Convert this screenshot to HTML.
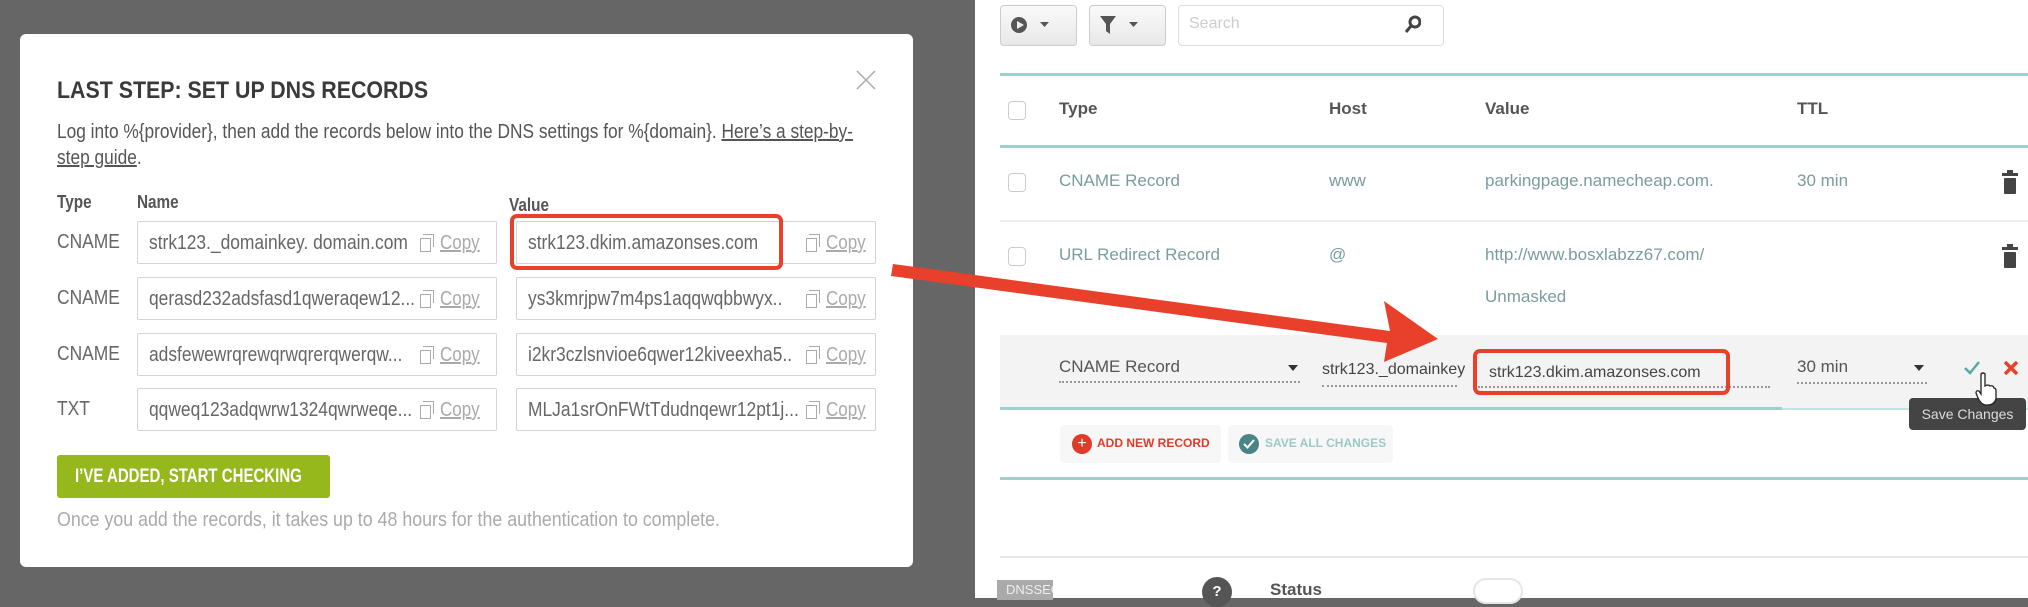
<!DOCTYPE html>
<html><head><meta charset="utf-8"><style>
*{margin:0;padding:0;box-sizing:border-box}
body{width:2028px;height:598px;overflow:hidden;background:#666;position:relative;font-family:"Liberation Sans",sans-serif}
.a{position:absolute;white-space:nowrap}
.sx{transform-origin:0 0}
.modal{position:absolute;left:20px;top:34px;width:893px;height:533px;background:#fff;border-radius:6px}
.box{position:absolute;height:43px;border:1px solid #d4d4d4;border-radius:2px;background:#fff;overflow:hidden}
.cp{position:absolute;font-size:20px;color:#aaa;text-decoration:underline;line-height:43px;transform:scaleX(.85);transform-origin:0 0}
.ic{position:absolute;width:11px;height:14px;border:1.5px solid #aaa;top:16px}
.ic:before{content:"";position:absolute;left:2px;top:-5px;width:10px;height:12px;border-top:1.5px solid #aaa;border-right:1.5px solid #aaa}
.t{font-size:20px;color:#666;line-height:43px;transform:scaleX(.87);transform-origin:0 0}
.right{position:absolute;left:975px;top:0;width:1053px;height:598px;background:#fff}
.rt{font-size:17px;color:#7a9c9d}
.dot{position:absolute;border-bottom:2px dotted #999;height:0}
</style></head><body>
<div class="modal">
<div class="a sx" style="left:37px;top:43px;font-size:24px;font-weight:bold;color:#3a3a3a;transform:scaleX(.89)">LAST STEP: SET UP DNS RECORDS</div>
<svg class="a" style="left:836px;top:36px" width="20" height="20"><path d="M1 1L19 19M19 1L1 19" stroke="#aaa" stroke-width="1.5"/></svg>
<div class="a sx" style="left:37px;top:85px;font-size:20px;color:#555;line-height:26px;transform:scaleX(.865)">Log into %{provider}, then add the records below into the DNS settings for %{domain}. <u>Here’s a step-by-</u><br><u>step guide</u>.</div>
<div class="a sx" style="left:37px;top:158px;font-size:18px;font-weight:bold;color:#555;transform:scaleX(.85)">Type</div>
<div class="a sx" style="left:117px;top:158px;font-size:18px;font-weight:bold;color:#555;transform:scaleX(.85)">Name</div>
<div class="a sx" style="left:489px;top:161px;font-size:18px;font-weight:bold;color:#555;transform:scaleX(.85)">Value</div>
</div>
<div class="a t" style="left:57px;top:221px">CNAME</div>
<div class="a t" style="left:57px;top:277px">CNAME</div>
<div class="a t" style="left:57px;top:333px">CNAME</div>
<div class="a t" style="left:57px;top:388px">TXT</div>

<div class="box" style="left:137px;top:221px;width:360px"><span class="a t" style="left:11px">strk123._domainkey. domain.com</span><span class="ic" style="left:282px"></span><span class="cp" style="left:302px">Copy</span></div>
<div class="box" style="left:137px;top:277px;width:360px"><span class="a t" style="left:11px">qerasd232adsfasd1qweraqew12...</span><span class="ic" style="left:282px"></span><span class="cp" style="left:302px">Copy</span></div>
<div class="box" style="left:137px;top:333px;width:360px"><span class="a t" style="left:11px">adsfewewrqrewqrwqrerqwerqw...</span><span class="ic" style="left:282px"></span><span class="cp" style="left:302px">Copy</span></div>
<div class="box" style="left:137px;top:388px;width:360px"><span class="a t" style="left:11px">qqweq123adqwrw1324qwrweqe...</span><span class="ic" style="left:282px"></span><span class="cp" style="left:302px">Copy</span></div>

<div class="box" style="left:516px;top:221px;width:360px"><span class="a t" style="left:11px">strk123.dkim.amazonses.com</span><span class="ic" style="left:289px"></span><span class="cp" style="left:309px">Copy</span></div>
<div class="box" style="left:516px;top:277px;width:360px"><span class="a t" style="left:11px">ys3kmrjpw7m4ps1aqqwqbbwyx..</span><span class="ic" style="left:289px"></span><span class="cp" style="left:309px">Copy</span></div>
<div class="box" style="left:516px;top:333px;width:360px"><span class="a t" style="left:11px">i2kr3czlsnvioe6qwer12kiveexha5..</span><span class="ic" style="left:289px"></span><span class="cp" style="left:309px">Copy</span></div>
<div class="box" style="left:516px;top:388px;width:360px"><span class="a t" style="left:11px">MLJa1srOnFWtTdudnqewr12pt1j...</span><span class="ic" style="left:289px"></span><span class="cp" style="left:309px">Copy</span></div>
<div class="a" style="left:510px;top:214px;width:273px;height:56px;border:4px solid #e8402a;border-radius:7px"></div>

<div class="a" style="left:57px;top:455px;width:273px;height:43px;background:#96b81c;border-radius:3px"></div>
<div class="a sx" style="left:75px;top:455px;color:#fff;font-weight:bold;font-size:19px;line-height:43px;transform:scaleX(.79)">I’VE ADDED, START CHECKING</div>
<div class="a sx" style="left:57px;top:509px;font-size:20px;color:#aaa;transform:scaleX(.89)">Once you add the records, it takes up to 48 hours for the authentication to complete.</div>

<div class="right">
<div class="a" style="left:25px;top:5px;width:77px;height:41px;border:1px solid #ccc;border-radius:4px;background:linear-gradient(#fafafa,#e8e8e8)"></div>
<div class="a" style="left:36px;top:17px;width:16px;height:16px;border-radius:50%;background:#555"></div>
<svg class="a" style="left:42px;top:21px" width="7" height="8"><path d="M0 0L7 4L0 8Z" fill="#eee"/></svg>
<svg class="a" style="left:65px;top:22px" width="9" height="5"><path d="M0 0H9L4.5 5Z" fill="#555"/></svg>
<div class="a" style="left:114px;top:5px;width:77px;height:41px;border:1px solid #ccc;border-radius:4px;background:linear-gradient(#fafafa,#e8e8e8)"></div>
<svg class="a" style="left:125px;top:16px" width="16" height="18"><path d="M0 0H16L10 8V18L6 15V8Z" fill="#555"/></svg>
<svg class="a" style="left:154px;top:22px" width="9" height="5"><path d="M0 0H9L4.5 5Z" fill="#555"/></svg>
<div class="a" style="left:203px;top:5px;width:266px;height:41px;border:1px solid #ddd;border-radius:4px"></div>
<div class="a" style="left:214px;top:15px;font-size:16px;color:#ccc">Search</div>
<svg class="a" style="left:430px;top:15px" width="16" height="18"><circle cx="10" cy="7" r="5" fill="none" stroke="#444" stroke-width="3"/><path d="M6 11L1 17" stroke="#444" stroke-width="3"/></svg>

<div class="a" style="left:25px;top:73px;width:1028px;height:3px;background:#9fcfcf"></div>
<div class="a" style="left:33px;top:101px;width:18px;height:19px;border:1.5px solid #ccc;border-radius:4px"></div>
<div class="a" style="left:84px;top:99px;font-size:17px;font-weight:bold;color:#555">Type</div>
<div class="a" style="left:354px;top:99px;font-size:17px;font-weight:bold;color:#555">Host</div>
<div class="a" style="left:510px;top:99px;font-size:17px;font-weight:bold;color:#555">Value</div>
<div class="a" style="left:822px;top:99px;font-size:17px;font-weight:bold;color:#555">TTL</div>
<div class="a" style="left:25px;top:145px;width:1028px;height:3px;background:#9fcfcf"></div>

<div class="a" style="left:33px;top:173px;width:18px;height:19px;border:1.5px solid #ccc;border-radius:4px"></div>
<div class="a rt" style="left:84px;top:171px">CNAME Record</div>
<div class="a rt" style="left:354px;top:171px">www</div>
<div class="a rt" style="left:510px;top:171px">parkingpage.namecheap.com.</div>
<div class="a rt" style="left:822px;top:171px">30 min</div>
<svg class="a" style="left:1027px;top:170px" width="16" height="24"><rect x="5" y="0" width="6" height="3" fill="#444"/><rect x="0" y="3" width="16" height="3" fill="#444"/><rect x="2" y="8" width="12" height="16" rx="1" fill="#444"/></svg>
<div class="a" style="left:25px;top:220px;width:1028px;height:2px;background:#eee"></div>

<div class="a" style="left:33px;top:247px;width:18px;height:19px;border:1.5px solid #ccc;border-radius:4px"></div>
<div class="a rt" style="left:84px;top:245px">URL Redirect Record</div>
<div class="a rt" style="left:354px;top:245px">@</div>
<div class="a rt" style="left:510px;top:245px">http://www.bosxlabzz67.com/</div>
<div class="a rt" style="left:510px;top:287px">Unmasked</div>
<svg class="a" style="left:1027px;top:244px" width="16" height="24"><rect x="5" y="0" width="6" height="3" fill="#444"/><rect x="0" y="3" width="16" height="3" fill="#444"/><rect x="2" y="8" width="12" height="16" rx="1" fill="#444"/></svg>

<div class="a" style="left:25px;top:335px;width:1028px;height:74px;background:#f3f3f3"></div>
<div class="a" style="left:25px;top:407px;width:782px;height:3px;background:#9fcfcf"></div>
<div class="a" style="left:807px;top:408px;width:246px;height:2px;background:#c8e3e3"></div>
<div class="a" style="left:84px;top:357px;font-size:17px;color:#555">CNAME Record</div>
<svg class="a" style="left:313px;top:365px" width="10" height="6"><path d="M0 0H10L5 6Z" fill="#333"/></svg>
<div class="dot" style="left:84px;top:381px;width:241px"></div>
<div class="a" style="left:347px;top:361px;font-size:16px;color:#444">strk123._domainkey</div>
<div class="dot" style="left:347px;top:385px;width:135px"></div>
<div class="a" style="left:514px;top:364px;font-size:16px;color:#444">strk123.dkim.amazonses.com</div>
<div class="dot" style="left:503px;top:386px;width:292px"></div>
<div class="a" style="left:498px;top:349px;width:257px;height:46px;border:4px solid #e8402a;border-radius:7px"></div>
<div class="a" style="left:822px;top:357px;font-size:17px;color:#555">30 min</div>
<svg class="a" style="left:939px;top:365px" width="10" height="6"><path d="M0 0H10L5 6Z" fill="#333"/></svg>
<div class="dot" style="left:822px;top:382px;width:130px"></div>
<svg class="a" style="left:989px;top:361px" width="16" height="14"><path d="M1 7L6 12L15 1" fill="none" stroke="#5aa8a8" stroke-width="2.5"/></svg>
<svg class="a" style="left:1029px;top:361px" width="14" height="14"><path d="M1 1L13 13M13 1L1 13" stroke="#e8402a" stroke-width="3.5"/></svg>
<div class="a" style="left:934px;top:398px;width:117px;height:32px;background:#444;border-radius:4px;color:#ddd;font-size:14px;line-height:32px;text-align:center">Save Changes</div>
<svg class="a" style="left:1000px;top:372px" width="22" height="34"><path d="M6 2Q8 0 10 2V14Q13 12 15 14Q18 13 19 16Q21 16 21 19V27Q19 33 13 33H10Q6 32 3 26L1 21Q1 18 4 19L6 22Z" fill="#fff" stroke="#222" stroke-width="1.3"/></svg>

<div class="a" style="left:85px;top:425px;width:161px;height:38px;background:#f7f7f7;border-radius:4px"></div>
<div class="a" style="left:97px;top:434px;width:20px;height:20px;border-radius:50%;background:#e03a2a;color:#fff;font-size:16px;line-height:20px;text-align:center">+</div>
<div class="a" style="top:436px;font-size:12px;font-weight:bold;color:#e03a2a;left:122px">ADD NEW RECORD</div>
<div class="a" style="left:253px;top:425px;width:165px;height:38px;background:#f7f7f7;border-radius:4px"></div>
<div class="a" style="left:264px;top:434px;width:20px;height:20px;border-radius:50%;background:#4a8484"></div>
<svg class="a" style="left:268px;top:439px" width="12" height="10"><path d="M1 5L4.5 8.5L11 1" fill="none" stroke="#fff" stroke-width="2"/></svg>
<div class="a" style="left:290px;top:436px;font-size:12px;font-weight:bold;color:#9cc9c9">SAVE ALL CHANGES</div>
<div class="a" style="left:25px;top:477px;width:1028px;height:3px;background:#9fcfcf"></div>
<div class="a" style="left:25px;top:556px;width:1028px;height:2px;background:#e8e8e8"></div>
<div class="a" style="left:22px;top:580px;width:56px;height:20px;background:#aaa;color:#eee;font-size:13px;line-height:20px;padding-left:9px;overflow:hidden">DNSSEC</div>
<div class="a" style="left:227px;top:577px;width:30px;height:30px;border-radius:50%;background:#555;color:#fff;font-size:15px;font-weight:bold;line-height:30px;text-align:center">?</div>
<div class="a" style="left:295px;top:580px;font-size:17px;font-weight:bold;color:#555">Status</div>
<div class="a" style="left:498px;top:578px;width:50px;height:26px;border-radius:13px;border:2px solid #e6e6e6;background:#fff"></div>
</div>

<svg class="a" style="left:0;top:0" width="2028" height="598"><path d="M893 264L1390 331L1384 301L1438 339L1384 362L1387 343L891 276Z" fill="#e8402a"/></svg>
</body></html>
